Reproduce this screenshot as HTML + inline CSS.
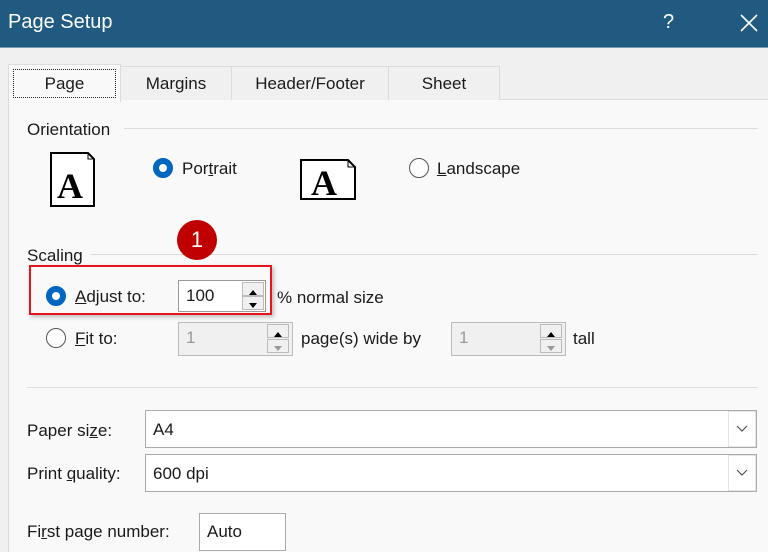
<!DOCTYPE html><html><head><style>
body{margin:0;width:768px;height:551px;overflow:hidden;background:#f0f0f0;font-family:"Liberation Sans",sans-serif;font-size:17px;color:#1a1a1a;position:relative}
.a{position:absolute;white-space:nowrap}
.tab{position:absolute;top:66px;height:33px;background:#f0f0f0;border:1px solid #dcdcdc;border-bottom:none;text-align:center;line-height:34px}
.line{position:absolute;height:1px;background:#dcdcdc}
.rad{position:absolute;width:20px;height:20px;border-radius:50%;box-sizing:border-box}
.on{border:6px solid #0067c0;background:#fff}
.off{border:1.5px solid #555;background:#fff}
.box{position:absolute;background:#fff;border:1px solid #8a8a8a;box-sizing:border-box;line-height:30px;padding-left:7px}
.spin{position:absolute;width:22px;height:14px;border:1px solid #bbb;background:#f0f0f0;box-sizing:border-box}
u{text-decoration:underline}
</style></head><body>
<div class="a" style="left:0;top:0;width:768px;height:48px;background:#215a80"></div>
<div class="a" style="left:0;top:47px;width:768px;height:1px;background:#7a9ab0"></div>
<div class="a" style="left:8px;top:11px;color:#fff;font-size:20px">Page Setup</div>
<div class="a" style="left:663px;top:11px;color:#fff;font-size:20px">?</div>
<svg class="a" style="left:739px;top:13px" width="20" height="20"><path d="M2 2L18 18M18 2L2 18" stroke="#fff" stroke-width="1.6"/></svg>
<div class="a" style="left:8px;top:99px;width:760px;height:452px;background:#f9f9f9;border-left:1px solid #dcdcdc;border-top:1px solid #dcdcdc"></div>
<div class="tab" style="left:8px;top:64px;width:111px;height:37px;background:#f9f9f9"><div style="position:absolute;left:4px;top:4px;right:4px;bottom:4px;border:1px dotted #222"></div><span style="line-height:38px">Page</span></div>
<div class="tab" style="left:120px;width:110px">Margins</div>
<div class="tab" style="left:231px;width:156px">Header/Footer</div>
<div class="tab" style="left:388px;width:110px">Sheet</div>
<div class="a" style="left:27px;top:120px">Orientation</div>
<div class="line" style="left:124px;top:128px;width:634px"></div>
<svg class="a" style="left:50px;top:152px" width="46" height="56"><path d="M1 1H38L44 7V54H1Z" fill="#fff" stroke="#000" stroke-width="2"/><path d="M38 1V7H44" fill="none" stroke="#000"/><text x="7" y="46" font-family="Liberation Serif" font-size="36" font-weight="bold">A</text></svg>
<div class="rad on" style="left:153px;top:158px"></div>
<div class="a" style="left:182px;top:159px">Por<u>t</u>rait</div>
<svg class="a" style="left:300px;top:159px" width="56" height="42"><path d="M1 1H48L55 8V40H1Z" fill="#fff" stroke="#000" stroke-width="2"/><path d="M48 1V8H55" fill="none" stroke="#000"/><text x="11" y="36" font-family="Liberation Serif" font-size="36" font-weight="bold">A</text></svg>
<div class="rad off" style="left:409px;top:158px"></div>
<div class="a" style="left:437px;top:159px"><u>L</u>andscape</div>
<div class="a" style="left:27px;top:246px">Scaling</div>
<div class="line" style="left:90px;top:254px;width:668px"></div>
<div class="a" style="left:177px;top:220px;width:40px;height:40px;border-radius:50%;background:#c00000;color:#fff;font-size:22px;text-align:center;line-height:40px">1</div>
<div class="a" style="left:29px;top:265px;width:243px;height:50px;border:2.5px solid #e8141b;box-sizing:border-box;box-shadow:2px 2px 4px rgba(0,0,0,.25)"></div>
<div class="rad on" style="left:46px;top:286px"></div>
<div class="a" style="left:75px;top:287px"><u>A</u>djust to:</div>
<div class="box" style="left:178px;top:280px;width:88px;height:32px;border-color:#999">100</div>
<div class="spin" style="left:242px;top:282px"><svg width="20" height="12"><path d="M6 9L10 4L14 9Z"/></svg></div>
<div class="spin" style="left:242px;top:296px"><svg width="20" height="12"><path d="M6 3L10 8L14 3Z"/></svg></div>
<div class="a" style="left:277px;top:288px">% normal size</div>
<div class="rad off" style="left:46px;top:328px"></div>
<div class="a" style="left:75px;top:329px"><u>F</u>it to:</div>
<div class="box" style="left:178px;top:322px;width:115px;height:34px;background:#f0f0f0;border-color:#bbb;color:#999">1</div>
<div class="spin" style="left:267px;top:324px;background:#f0f0f0"><svg width="20" height="12"><path d="M6 9L10 4L14 9Z"/></svg></div>
<div class="spin" style="left:267px;top:339px"><svg width="20" height="12"><path d="M6 3L10 8L14 3Z" fill="#999"/></svg></div>
<div class="a" style="left:301px;top:329px">page(s) wide by</div>
<div class="box" style="left:451px;top:322px;width:115px;height:34px;background:#f0f0f0;border-color:#bbb;color:#999">1</div>
<div class="spin" style="left:540px;top:324px"><svg width="20" height="12"><path d="M6 9L10 4L14 9Z"/></svg></div>
<div class="spin" style="left:540px;top:339px"><svg width="20" height="12"><path d="M6 3L10 8L14 3Z" fill="#999"/></svg></div>
<div class="a" style="left:573px;top:329px">tall</div>
<div class="line" style="left:27px;top:387px;width:731px"></div>
<div class="a" style="left:27px;top:421px">Paper si<u>z</u>e:</div>
<div class="box" style="left:145px;top:410px;width:612px;height:38px;line-height:38px;border-color:#aaa">A4</div>
<svg class="a" style="left:728px;top:411px" width="28" height="36"><rect x="0" y="0" width="28" height="36" fill="#fff" stroke="#ccc"/><path d="M9 15L14 20L19 15" fill="none" stroke="#555" stroke-width="1.2"/></svg>
<div class="a" style="left:27px;top:464px">Print <u>q</u>uality:</div>
<div class="box" style="left:145px;top:454px;width:612px;height:38px;line-height:38px;border-color:#aaa">600 dpi</div>
<svg class="a" style="left:728px;top:455px" width="28" height="36"><rect x="0" y="0" width="28" height="36" fill="#fff" stroke="#ccc"/><path d="M9 15L14 20L19 15" fill="none" stroke="#555" stroke-width="1.2"/></svg>
<div class="a" style="left:27px;top:522px">Fi<u>r</u>st page number:</div>
<div class="box" style="left:199px;top:513px;width:87px;height:38px;line-height:36px;border-color:#aaa">Auto</div>
</body></html>
